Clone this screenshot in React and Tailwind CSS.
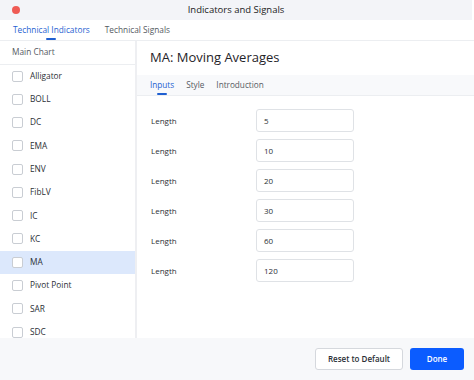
import { useState } from "react";

const indicators = ["Alligator", "BOLL", "DC", "EMA", "ENV", "FibLV", "IC", "KC", "MA", "Pivot Point", "SAR", "SDC"];
const lengths = [5, 10, 20, 30, 60, 120];

const Checkbox = () => (
    <span className="w-[11px] h-[11px] rounded-[2px] border border-[#c9cdd3] bg-white shrink-0"></span>
);

const App = () => {
    const [active, setActive] = useState("MA");
    const [tab, setTab] = useState("Inputs");

    return (
        <div className="w-[474px] h-[380px] flex flex-col bg-white overflow-hidden font-['Open_Sans',sans-serif] text-[#2b2f36]">
            {/* title bar */}
            <div className="h-[20px] shrink-0 grid grid-cols-[1fr_auto_1fr] items-center bg-[#f3f4f8] px-[12px] mr-[2px]">
                <span className="w-[8px] h-[8px] rounded-full bg-[#ef5b55]"></span>
                <span className="text-[9.5px] text-[#222] leading-none">Indicators and Signals</span>
                <span></span>
            </div>

            {/* top tabs */}
            <div className="h-[21px] shrink-0 flex items-stretch gap-[15px] px-[13px] border-b border-[#eceef1]">
                <div className="relative flex items-center pt-[1px] text-[8.3px] text-[#1f5fd1]">
                    Technical Indicators
                    <span className="absolute bottom-0 left-1/2 -translate-x-1/2 w-[10px] h-[2px] rounded-full bg-[#1f5fd1]"></span>
                </div>
                <div className="flex items-center pt-[1px] text-[8.3px] text-[#555a62]">Technical Signals</div>
            </div>

            <div className="flex-1 min-h-0 flex">
                {/* sidebar */}
                <div className="w-[137px] shrink-0 border-r-2 border-[#eeeff2] overflow-hidden">
                    <div className="h-[23.5px] flex items-center px-[12px] text-[8.3px] text-[#555a62] border-b border-[#eceef1]">Main Chart</div>
                    {indicators.map((name) => (
                        <div
                            key={name}
                            onClick={() => setActive(name)}
                            className={`h-[23.27px] flex items-center gap-[7px] px-[12px] text-[8.3px] ${active === name ? "bg-[#dce8fc]" : ""}`}
                        >
                            <Checkbox />
                            <span>{name}</span>
                        </div>
                    ))}
                </div>

                {/* right panel */}
                <div className="flex-1 flex flex-col min-w-0">
                    <div className="h-[34px] flex items-center px-[13px] text-[13px] text-[#1f2329]">MA: Moving Averages</div>
                    <div className="h-[21px] flex items-stretch gap-[12px] px-[13px] bg-[#f8f9fb] border-b border-[#eceef1]">
                        {["Inputs", "Style", "Introduction"].map((t) => (
                            <div
                                key={t}
                                onClick={() => setTab(t)}
                                className={`relative flex items-center text-[8.2px] ${tab === t ? "text-[#1f5fd1]" : "text-[#555a62]"}`}
                            >
                                {t}
                                {tab === t && <span className="absolute bottom-0 left-1/2 -translate-x-1/2 w-[10px] h-[2px] rounded-full bg-[#1f5fd1]"></span>}
                            </div>
                        ))}
                    </div>
                    <div className="flex flex-col gap-[7px] pt-[13px] px-[14px]">
                        {lengths.map((v, i) => (
                            <div key={i} className="flex items-center">
                                <span className="w-[105px] text-[8px]">Length</span>
                                <div className="w-[98px] h-[23px] flex items-center px-[7px] rounded-[3px] border border-[#dfe2e6] text-[8px]">{v}</div>
                            </div>
                        ))}
                    </div>
                </div>
            </div>

            {/* footer */}
            <div className="h-[42px] shrink-0 flex items-center justify-end gap-[7px] pr-[10px] bg-[#f7f8fa]">
                <button className="w-[88px] h-[22px] rounded-[3px] border border-[#d5d8dd] bg-white text-[8px] font-semibold text-[#2b2f36]">Reset to Default</button>
                <button className="w-[54px] h-[22px] rounded-[3px] bg-[#0b5cff] text-[8px] font-semibold text-white">Done</button>
            </div>
        </div>
    );
};

export default App;
